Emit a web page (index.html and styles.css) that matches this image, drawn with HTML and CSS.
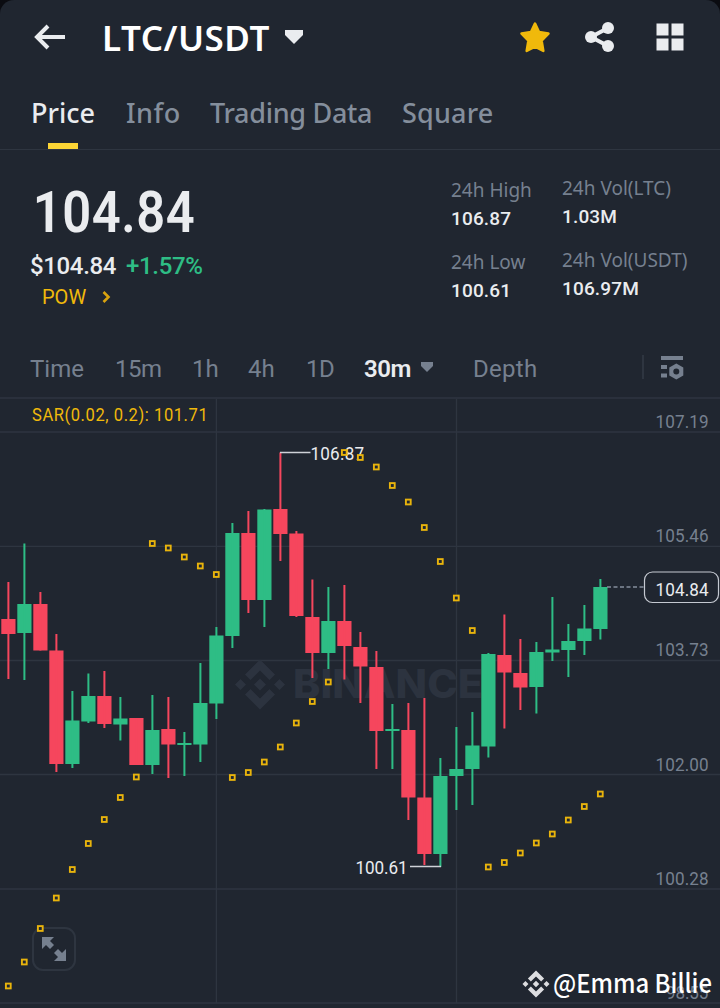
FILE: index.html
```html
<!DOCTYPE html>
<html lang="en">
<head>
<meta charset="utf-8">
<title>LTC/USDT</title>
<link rel="stylesheet" href="styles.css">
</head>
<body>
<main class="app">
  <header class="topbar">
    <svg class="back" width="32" height="26" viewBox="0 0 32 26"><path d="M31 13H4M14 2 3 13l11 11" fill="none" stroke="#eaecef" stroke-width="4"/></svg>
    <h1 class="pair">LTC/USDT</h1>
    <svg class="caret" width="18" height="14" viewBox="0 0 18 14"><path d="M0 0h18v5l-9 9-9-9z" fill="#eaecef"/></svg>
    <div class="actions">
      <svg width="30" height="31" viewBox="0 0 30 31"><path d="M15 1.600 19 10l9.400 1.500-6.800 7.100 1.700 10.300L15 24.600l-8.300 4.300 1.700-10.300-6.800-7.100L11 10z" fill="#f0b90b" stroke="#f0b90b" stroke-width="2.600" stroke-linejoin="round"/></svg>
      <svg width="30" height="30" viewBox="0 0 30 30"><path d="M23 6 6 15l17 9" fill="none" stroke="#eaecef" stroke-width="4"/><g fill="#eaecef"><circle cx="23" cy="6" r="6"/><circle cx="6" cy="15" r="6"/><circle cx="23" cy="24" r="6"/></g></svg>
      <svg width="28" height="28" viewBox="0 0 28 28"><path d="M.5.5h12v12H.5zM15.500.5h12v12h-12zM.5 15.500h12v12H.5zM15.500 15.500h12v12h-12z" fill="#eaecef"/></svg>
    </div>
  </header>

  <nav class="tabs">
    <a class="tab tab-active">Price</a>
    <a class="tab tab-info">Info</a>
    <a class="tab tab-data">Trading Data</a>
    <a class="tab tab-square">Square</a>
  </nav>

  <section class="summary">
    <div class="quote">
      <div class="last">104.84</div>
      <div class="change"><span>$104.84</span><span class="up">+1.57%</span></div>
      <div class="tag"><span>POW</span><svg width="9" height="12" viewBox="0 0 9 12"><path d="m1.500 1 5 5-5 5" fill="none" stroke="#d9a30f" stroke-width="2.600"/></svg></div>
    </div>
    <dl class="stats stats-range">
      <dt>24h High</dt><dd>106.87</dd>
      <dt>24h Low</dt><dd>100.61</dd>
    </dl>
    <dl class="stats stats-volume">
      <dt>24h Vol(LTC)</dt><dd>1.03M</dd>
      <dt>24h Vol(USDT)</dt><dd>106.97M</dd>
    </dl>
  </section>

  <nav class="intervals">
    <span class="iv iv-time">Time</span>
    <span class="iv iv-15">15m</span>
    <span class="iv iv-1h">1h</span>
    <span class="iv iv-4h">4h</span>
    <span class="iv iv-1d">1D</span>
    <span class="iv iv-on">30m</span>
    <svg class="iv-caret" width="12" height="10" viewBox="0 0 12 10"><path d="M0 0h12v4L6 10 0 4z" fill="#76808f"/></svg>
    <span class="iv iv-depth">Depth</span>
    <i class="divider"></i>
    <svg class="settings" width="24" height="25" viewBox="0 0 24 25" fill="#76808f"><path d="M1 1h22v4H1zM1 10h6v4H1zM1 18.500h6v4H1z"/><path fill-rule="evenodd" d="m16.300 8.500 7 4v8l-7 4-7-4v-8zM16.300 13.500a3 3 0 1 0 0 6 3 3 0 0 0 0-6z"/></svg>
  </nav>

  <section class="chart-panel">
    <svg id="chart" class="chart" width="720" height="611" viewBox="0 397 720 611">
      <g id="grid" class="grid"></g>
      <g class="watermark">
        <g transform="translate(260 684.500)"><path id="mark" d="M0-25 15-10 9.500-4.500 0-14-9.500-4.500-15-10zM0-6 6 0 0 6-6 0zM-19.500-5.500-14 0-19.500 5.500-25 0zM19.500-5.500 25 0 19.500 5.500 14 0zM0 25 15 10 9.500 4.500 0 14-9.500 4.500-15 10z"/></g>
        <text x="293" y="698" textLength="190" lengthAdjust="spacingAndGlyphs">BINANCE</text>
      </g>
      <g id="axis" class="axis"></g>
      <g class="expand">
        <rect x="33" y="928" width="42" height="42" rx="10"/>
        <path d="M42 937h12l-4 4 4 4-4 4-4-4-4 4zM66 961H54l4-4-4-4 4-4 4 4 4-4z"/>
      </g>
      <g id="candles"></g>
      <text class="legend" transform="translate(32 421) scale(.92 1)" textLength="191">SAR(0.02, 0.2): 101.71</text>
      <path class="leader" d="M280 452.500h30.500M410 866.500h31"/>
      <text class="extreme" transform="translate(310.500 460) scale(.9 1)" textLength="59.500">106.87</text>
      <text class="extreme" transform="translate(355.500 874) scale(.9 1)" textLength="58">100.61</text>
      <g id="sar" class="sar"></g>
      <path class="last-line" d="M607 587h37"/>
      <rect class="last-box" x="644.500" y="572" width="74" height="30.500" rx="8"/>
      <text class="last-text" transform="translate(655.500 596) scale(.9 1)" textLength="59">104.84</text>
      <g class="credit">
        <g transform="translate(536 984) scale(.54)"><use href="#mark"/></g>
        <text x="553" y="993" textLength="159" lengthAdjust="spacingAndGlyphs">@Emma Billie</text>
      </g>
    </svg>
  </section>
</main>
<script src="chart.js"></script>
</body>
</html>
```
FILE: styles.css
```css
* { box-sizing: border-box; }
body { margin: 0; background: #0b0c11; font-family: Roboto, sans-serif; color: #eaecef; }
svg { display: block; flex: none; }
.app { width: 720px; height: 1008px; overflow: hidden; background: #202630; border-radius: 14px 14px 0 0; }

.topbar { display: flex; align-items: center; height: 74px; padding: 0 36px 0 34px; }
.pair { width: 166px; margin: 0 17px 0 36px; padding-top: 2px; font: 600 35px/50px "Noto Sans", sans-serif; letter-spacing: .5px; white-space: nowrap; color: #fff; }
.actions { display: flex; align-items: center; gap: 35px; margin-left: auto; }
.actions svg:last-child { margin-left: 6px; }

.tabs { display: flex; height: 76px; padding-left: 30px; border-bottom: 1px solid #2e3540; font: 500 27px/78px "Noto Sans", sans-serif; color: #848e9c; white-space: nowrap; }
.tab-active { display: grid; grid-template-rows: 69px 6px; justify-items: center; width: 66px; margin-right: 30px; color: #eaecef; }
.tab-active::after { content: ""; width: 30px; height: 6px; background: #fcd535; }
.tab-info { width: 84px; letter-spacing: .5px; }
.tab-data { width: 192px; letter-spacing: -.3px; }
.tab-square { letter-spacing: .2px; }

.summary { display: flex; height: 190px; white-space: nowrap; }
.quote { width: 451px; padding: 30px 0 0 30px; }
.last { height: 64px; padding-left: 3px; font-size: 57px; line-height: 66px; font-weight: 600; letter-spacing: .6px; transform: scaleX(.89); transform-origin: 0 0; }
.change { display: flex; gap: 10px; margin-top: 5px; font-size: 24px; line-height: 34px; font-weight: 500; letter-spacing: -.35px; }
.up { color: #2ebd85; }
.tag { display: flex; align-items: center; gap: 16px; padding-left: 12px; font-size: 20px; line-height: 28px; color: #f0b90b; }
.stats { margin: 0; font-size: 19px; }
.stats-range { width: 111px; padding-top: 26px; }
.stats-volume { padding-top: 24px; }
.stats dt { font: 19px/28px "Noto Sans", sans-serif; color: #76808f; }
.stats dd { margin: 0 0 16px; line-height: 29px; height: 28px; font-weight: 500; letter-spacing: .15px; }

.intervals { display: flex; align-items: center; height: 57px; padding: 0 36px 0 30px; font-size: 24px; color: #76808f; white-space: nowrap; }
.iv-time { width: 85px; }
.iv-15 { width: 77px; letter-spacing: -.5px; }
.iv-1h { width: 56px; }
.iv-4h { width: 58px; }
.iv-1d { width: 58px; letter-spacing: -.5px; }
.iv-on { width: 57px; font-weight: 600; color: #eaecef; letter-spacing: -.4px; }
.iv-caret { margin-top: -3px; }
.iv-depth { margin-left: 40px; letter-spacing: .3px; }
.divider { width: 2px; height: 24px; margin: -3px 16px 0 auto; background: #2e3540; }
.settings { margin-top: -2px; }

.chart { font-family: Roboto, sans-serif; }
.grid path { stroke: #2e3540; stroke-width: 1.300; fill: none; }
.watermark { fill: #2c333f; }
.watermark text { font: 800 39px Inter, sans-serif; }
.axis text { fill: #76808f; font-size: 19px; }
.legend { fill: #f0b90b; font-size: 18px; }
.leader { stroke: #cfd2d8; stroke-width: 1.300; }
.extreme { fill: #eaecef; font-size: 19px; }
.up-candle { fill: #2ebd85; }
.down-candle { fill: #f6465d; }
.sar rect { fill: #202630; stroke: #e9b40c; stroke-width: 1.900; }
.expand rect { fill: #202630; stroke: #2e3540; stroke-width: 2; }
.expand path { fill: #76808f; }
.last-line { stroke: #848e9c; stroke-width: 1.500; stroke-dasharray: 4 2.500; }
.last-box { fill: #202630; stroke: #c5c9d1; stroke-width: 1.200; }
.last-text { fill: #eaecef; font-size: 19px; }
.credit { fill: #dcdde0; }
.credit text { fill: #fff; font: 500 26px "Noto Sans CJK SC", sans-serif; }
```
FILE: chart.js
```js
// [open/close top, open/close bottom, high, low, rising, SAR], in canvas units
const candles = [
  [619,634,582,679,0,986],[604,633,543.5,680,1,962],[604,650.5,592,650.5,0,928.5],
  [650.5,764,634,772,0,898],[720.5,764,691,768,1,869.5],[696,721.5,673.5,723,1,843.5],
  [696,724,671,728,0,819.5],[718.5,724.5,697,740.5,1,797.5],[718,765,718,765,0,777],
  [730,765,695,774,1,543.5],[729,744.5,697,778,0,548],[743,745,732,776,1,557],
  [703,744.5,663,762,1,566],[635.5,703.5,627,719,1,574.5],[533,636,523,648,1,777.5],
  [533,600,511,613,0,772.5],[509.5,600,509,627,1,762],[509,534,452.5,561,0,747],
  [533.5,616,531,617,0,723],[617,653,579.5,678,0,701.5],[621,653,587,669,1,682],
  [621,646,585,679.5,0,452.5],[647,666.5,632,703,0,457.5],[667,731,651,769,0,467],
  [729,731,704,769,1,485.5],[730,797.5,703,820,0,502],[797.5,854,698,865,0,527.5],
  [776,854,758,867,1,561.5],[769,776,727,810,1,598],[745.5,769,712,805,1,630.5],
  [654,746.5,653,757.5,1,867],[655,672.5,614.5,728.5,0,862.5],[673,687.5,639,710,0,853],
  [652,687,642,713.5,1,843],[649.5,652.5,597,661,1,834],[641,650,624,677,1,820],
  [628.5,641,605,655,1,806.5],[587,629,579,639.5,1,794]
];
const fill = (id, html) => { document.getElementById(id).innerHTML = html; };

fill('grid',
  [398, 432, 546.3, 660.5, 774.5, 889, 1003].map(y => `<path d="M0 ${y}H720"/>`).join('') +
  [216.4, 456.5].map(x => `<path d="M${x} 399V1003"/>`).join(''));

fill('axis',
  [['107.19', 428], ['105.46', 542], ['103.73', 656], ['102.00', 771], ['100.28', 885], ['98.55', 999]]
    .map(([t, y]) => {
      const short = t.length < 6;
      return `<text transform="translate(${short ? 666 : 655.5} ${y}) scale(.9 1)" textLength="${short ? 47 : 59}">${t}</text>`;
    }).join(''));

fill('candles', candles.map(([top, bottom, high, low, up], i) => {
  const x = 8.4 + i * 16;
  return `<g class="${up ? 'up' : 'down'}-candle"><rect x="${x - 7.1}" y="${top}" width="14.200" height="${bottom - top}"/>` +
    `<rect x="${x - 1}" y="${high}" width="2" height="${low - high}"/></g>`;
}).join(''));

fill('sar', candles.map((c, i) => `<rect x="${5.9 + i * 16}" y="${c[5] - 2.4}" width="4.800" height="4.800"/>`).join(''));
```
